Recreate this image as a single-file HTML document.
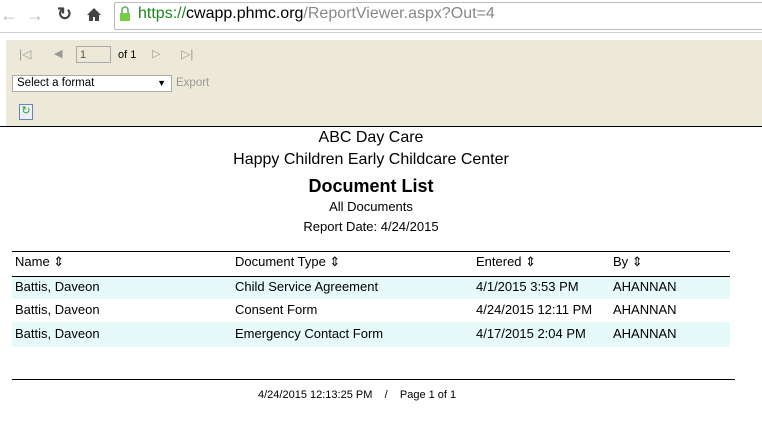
<!DOCTYPE html>
<html><head><style>
body{margin:0;width:762px;height:433px;overflow:hidden;background:#fff;font-family:"Liberation Sans",Arial,sans-serif;position:relative}
.a{position:absolute}
.t{position:absolute;white-space:nowrap;font-size:13px;color:#000}
.c{position:absolute;left:0;width:742px;text-align:center;white-space:nowrap}
</style></head><body>
<div class="a" style="left:0;top:0;width:762px;height:32px;background:#fff;border-bottom:1px solid #d0d0d0"></div>
<div class="t" style="left:0;top:5px;font-size:18px;color:#bbb">&#8592;</div>
<div class="t" style="left:26px;top:5px;font-size:18px;color:#bbb">&#8594;</div>
<div class="t" style="left:57px;top:4px;font-size:18px;color:#444;font-weight:bold">&#8635;</div>
<svg class="a" style="left:86px;top:7px" width="16" height="15"><path d="M8 1L1 8h2v6h4v-4h2v4h4V8h2z" fill="#444"/></svg>
<div class="a" style="left:114px;top:2px;width:660px;height:26px;border:1px solid #bbb;border-radius:2px"></div>
<svg class="a" style="left:119px;top:6px" width="12" height="16"><path d="M3 7V4a3 3 0 0 1 6 0v3" stroke="#6a6" stroke-width="1.6" fill="none"/><rect x="1" y="7" width="10" height="8" fill="#7c4"/></svg>
<div class="t" style="left:138px;top:5px;font-size:16px;color:#1a8a1a">https://<span style="color:#000">cwapp.phmc.org</span><span style="color:#888">/ReportViewer.aspx?Out=4</span></div>
<div class="a" style="left:6px;top:40px;width:756px;height:86px;background:#ece9d8"></div>
<div class="a" style="left:0;top:126px;width:762px;height:1px;background:#000"></div>
<div class="t" style="left:19px;top:47px;font-size:12px;color:#999">|◁</div>
<div class="t" style="left:54px;top:47px;font-size:11px;color:#999">◀</div>
<div class="a" style="left:76px;top:46px;width:35px;height:17px;border:1px solid #aaa;background:#ece9d8;font-size:11px;line-height:17px;padding-left:3px;box-sizing:border-box;color:#555">1</div>
<div class="t" style="left:118px;top:49px;font-size:11px">of 1</div>
<div class="t" style="left:152px;top:47px;font-size:11px;color:#999">▷</div>
<div class="t" style="left:181px;top:47px;font-size:12px;color:#999">▷|</div>
<div class="a" style="left:12px;top:75px;width:160px;height:17px;border:1px solid #aaa;background:#fff;box-sizing:border-box;font-size:11.5px;line-height:15px;padding-left:4px">Select a format<span style="position:absolute;right:5px;font-size:9px">▼</span></div>
<div class="t" style="left:176px;top:77px;font-size:11.5px;color:#999">Export</div>
<div class="a" style="left:19px;top:104px;width:12px;height:14px;border:1px solid #68a;background:#eef;font-size:11px;line-height:13px;color:#2a2;text-align:center">&#8635;</div>
<div class="c" style="top:129px;font-size:16px">ABC Day Care</div>
<div class="c" style="top:151px;font-size:16px">Happy Children Early Childcare Center</div>
<div class="c" style="top:176px;font-size:18px;font-weight:bold">Document List</div>
<div class="c" style="top:199px;font-size:13px">All Documents</div>
<div class="c" style="top:219px;font-size:13px">Report Date: 4/24/2015</div>
<div class="a" style="left:12px;top:251px;width:718px;height:1px;background:#000"></div>
<div class="a" style="left:12px;top:276px;width:718px;height:1px;background:#000"></div>
<div class="a" style="left:12px;top:277px;width:718px;height:22px;background:#e6fafa"></div>
<div class="a" style="left:12px;top:322px;width:718px;height:25px;background:#e6fafa"></div>
<div class="t" style="left:15px;top:254px">Name ⇕</div>
<div class="t" style="left:235px;top:254px">Document Type ⇕</div>
<div class="t" style="left:476px;top:254px">Entered ⇕</div>
<div class="t" style="left:613px;top:254px">By ⇕</div>
<div class="t" style="left:15px;top:279px">Battis, Daveon</div><div class="t" style="left:235px;top:279px">Child Service Agreement</div><div class="t" style="left:476px;top:279px">4/1/2015 3:53 PM</div><div class="t" style="left:613px;top:279px">AHANNAN</div>
<div class="t" style="left:15px;top:302px">Battis, Daveon</div><div class="t" style="left:235px;top:302px">Consent Form</div><div class="t" style="left:476px;top:302px">4/24/2015 12:11 PM</div><div class="t" style="left:613px;top:302px">AHANNAN</div>
<div class="t" style="left:15px;top:326px">Battis, Daveon</div><div class="t" style="left:235px;top:326px">Emergency Contact Form</div><div class="t" style="left:476px;top:326px">4/17/2015 2:04 PM</div><div class="t" style="left:613px;top:326px">AHANNAN</div>
<div class="a" style="left:12px;top:379px;width:723px;height:1px;background:#000"></div>
<div class="t" style="left:258px;top:389px;font-size:11px">4/24/2015 12:13:25 PM &nbsp;&nbsp;&nbsp;/ &nbsp;&nbsp;&nbsp;Page 1 of 1</div>
</body></html>
